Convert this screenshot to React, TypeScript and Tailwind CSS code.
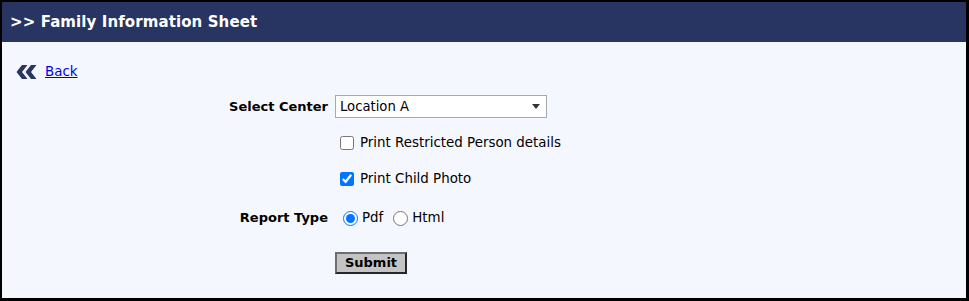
import React from "react";

export default function App() {
  const font = { fontFamily: '"DejaVu Sans", Verdana, sans-serif' };
  return (
    <div
      className="w-[969px] h-[301px] box-border border-l-2 border-t-2 border-r-[3px] border-b-[3px] border-black bg-[#f4f7fe] flex flex-col"
      style={font}
    >
      <div className="h-[40px] bg-[#283462] flex items-center pl-[8px] pt-[1px]">
        <span className="text-white font-bold text-[15px] tracking-[0.1px]">
          &gt;&gt; Family Information Sheet
        </span>
      </div>
      <div className="pl-[14px] pt-[22px] flex items-center gap-[7px]">
        <svg width="22" height="14" viewBox="0 0 22 14">
          <path d="M6 0 L11.5 0 L6 7 L11.5 14 L6 14 L0.5 7 Z" fill="#2a3560" />
          <path d="M15 0 L20.5 0 L15 7 L20.5 14 L15 14 L9.5 7 Z" fill="#2a3560" />
        </svg>
        <a href="#" className="text-[13.4px] text-[#0000ee] underline leading-[16px]">
          Back
        </a>
      </div>
      <div className="flex flex-col pt-[15px]">
        <div className="flex items-center h-[23px]">
          <div className="w-[326px] text-right font-bold text-[13px] text-black">Select Center</div>
          <div className="ml-[7px] w-[212px] h-[23px] bg-white border border-[#a9a9a9] flex items-center justify-between pl-[4px] pr-[6px] text-[13.2px] text-black">
            <span>Location A</span>
            <svg width="8" height="5" viewBox="0 0 8 5">
              <path d="M0 0 L8 0 L4 5 Z" fill="#333" />
            </svg>
          </div>
        </div>
        <div className="flex items-center h-[20px] mt-[15px] pl-[333px]">
          <input type="checkbox" className="m-0 ml-[5px] w-[14px] h-[14px]" />
          <span className="ml-[6px] text-[13.4px] text-black">Print Restricted Person details</span>
        </div>
        <div className="flex items-center h-[20px] mt-[16px] pl-[333px]">
          <input type="checkbox" defaultChecked className="m-0 ml-[5px] w-[14px] h-[14px]" />
          <span className="ml-[6px] text-[13.4px] text-black">Print Child Photo</span>
        </div>
        <div className="flex items-center h-[20px] mt-[19px]">
          <div className="w-[326px] text-right font-bold text-[13px] text-black">Report Type</div>
          <input type="radio" name="rt" defaultChecked className="m-0 ml-[15px] w-[15px] h-[15px]" />
          <span className="ml-[4px] text-[13.4px] text-black">Pdf</span>
          <input type="radio" name="rt" className="m-0 ml-[10px] w-[15px] h-[15px]" />
          <span className="ml-[4px] text-[13.4px] text-black">Html</span>
        </div>
        <div className="pl-[333px] mt-[22px]">
          <button className="w-[72px] h-[22px] bg-[#c4c4c4] border-2 border-t-[#6e6e6e] border-l-[#6e6e6e] border-r-[#262626] border-b-[#262626] font-bold text-[13px] text-black leading-none">
            Submit
          </button>
        </div>
      </div>
    </div>
  );
}
